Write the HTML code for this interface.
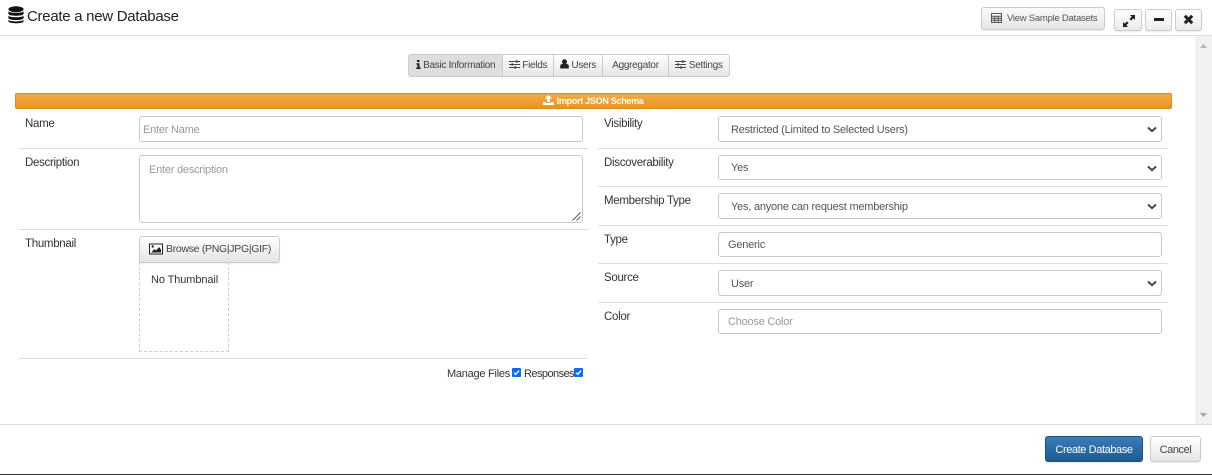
<!DOCTYPE html>
<html><head><meta charset="utf-8"><style>
html,body{margin:0;padding:0;width:1212px;height:475px;overflow:hidden;background:#fff}
body{position:relative;font-family:"Liberation Sans",sans-serif;font-size:11.5px;color:#333}
.a,.l,.f,.hr,.b{position:absolute;box-sizing:border-box;white-space:nowrap}
.hr{height:1px;background:#dcdcdc}
.l{font-size:11.5px;color:#333;line-height:14px;letter-spacing:-.3px;margin-top:1px}
.f{border:1px solid #c8c8c8;border-radius:3px;background:#fff;height:26px;line-height:24px;color:#555;font-size:11px;padding-left:12px;padding-top:1px;letter-spacing:-.22px}
.f.ph{color:#999;padding-left:9px}
.f svg{position:absolute;right:4px;top:9px}
.b{border:1px solid #ccc;border-radius:3px;background:linear-gradient(#fff,#e3e3e3);text-align:center;color:#333;box-shadow:0 1px 1px rgba(0,0,0,.08)}
.tab{position:absolute;box-sizing:border-box;top:54px;height:23px;border:1px solid #ccc;border-left:0;background:linear-gradient(#fff,#e6e6e6);font-size:10px;line-height:21px;text-align:center;color:#444;white-space:nowrap;letter-spacing:-.3px}
svg{display:inline-block;vertical-align:-1px}
</style></head><body>

<svg class="a" style="left:8px;top:6px" width="16" height="18" viewBox="0 0 16 18"><g fill="#111"><ellipse cx="8" cy="3.2" rx="7.6" ry="3"/><path d="M.4 5.2C1.5 7.4 14.5 7.4 15.6 5.2V8C14.5 10.4 1.5 10.4.4 8z"/><path d="M.4 9.6C1.5 11.8 14.5 11.8 15.6 9.6V12.2C14.5 14.6 1.5 14.6.4 12.2z"/><path d="M.4 13.8C1.5 16 14.5 16 15.6 13.8V15.4C14.5 18 1.5 18 .4 15.4z"/></g></svg>
<div class="a" style="left:27px;top:8px;font-size:15px;letter-spacing:-.28px;line-height:18px;color:#222">Create a new Database</div>

<div class="b" style="left:981px;top:7px;width:124px;height:23px;font-size:9.5px;letter-spacing:-.25px;line-height:21px;color:#555;text-align:left;padding-left:25px;background:linear-gradient(#fafafa,#e6e6e6)">View Sample Datasets
<svg class="a" style="left:9px;top:5px" width="11" height="10" viewBox="0 0 11 10"><path d="M.5.5h10v9H.5zM.5 3.2h10M.5 5.2h10M.5 7.3h10M3.7 3.2v6.3M7.2 3.2v6.3" fill="none" stroke="#555" stroke-width="1"/></svg></div>
<div class="b" style="left:1114px;top:9px;width:28px;height:22px;background:linear-gradient(#fff,#ececec)"><svg class="a" style="left:8px;top:5px" width="12" height="12" viewBox="0 0 12 12"><path d="M7 0h5v5L10.3 3.4 8 5.6 6.5 4 8.7 1.700zM0 12V7l1.700 1.600L4 6.400 5.500 8 3.300 10.300 5 12z" fill="#222"/></svg></div>
<div class="b" style="left:1145px;top:9px;width:27px;height:22px;background:linear-gradient(#fff,#ececec)"><div class="a" style="left:8px;top:8px;width:10px;height:3px;background:#222"></div></div>
<div class="b" style="left:1175px;top:9px;width:27px;height:22px;background:linear-gradient(#fff,#ececec)"><svg class="a" style="left:7px;top:4px" width="11" height="11" viewBox="0 0 11 11"><path d="M1.800 1.800L9.200 9.200M9.200 1.800L1.800 9.200" stroke="#222" stroke-width="3"/></svg></div>
<div class="hr" style="left:0;top:35px;width:1212px"></div>

<div class="a" style="left:1195px;top:36px;width:17px;height:388px;background:#f1f1f1"></div>
<svg class="a" style="left:1199px;top:43px" width="9" height="6"><path d="M4.500 1L8 5H1z" fill="#b5b5b5"/></svg>
<svg class="a" style="left:1199px;top:412px" width="9" height="6"><path d="M1 1h7L4.500 5z" fill="#a5a5a5"/></svg>

<div class="tab" style="left:408px;width:95px;border-left:1px solid #ccc;border-radius:3px 0 0 3px;background:#dedede">
<svg width="5" height="9" viewBox="0 0 5 9" style="vertical-align:-1px"><path d="M1 0h2.500v2H1zM.3 3.200h3.200V7.500H4.700V9H.3V7.500H1.300V4.500H.3z" fill="#222"/></svg> Basic Information</div>
<div class="tab" style="left:503px;width:51px"><svg width="11" height="9" viewBox="0 0 11 9"><path d="M0 1.500h11M0 4.500h11M0 7.500h11" stroke="#444" stroke-width="1"/><path d="M7 .2h1.500v2.600H7zM2.500 3.200H4v2.600H2.500zM5.500 6.200H7v2.600H5.500z" fill="#444"/></svg> Fields</div>
<div class="tab" style="left:554px;width:49px"><svg width="9" height="10" viewBox="0 0 9 10"><circle cx="4.500" cy="2.800" r="2.500" fill="#222"/><path d="M.2 9.500V7C.2 5.300 2 4.800 4.500 4.800S8.800 5.300 8.800 7V9.500z" fill="#222"/></svg> Users</div>
<div class="tab" style="left:603px;width:66px">Aggregator</div>
<div class="tab" style="left:669px;width:61px;border-radius:0 3px 3px 0"><svg width="11" height="9" viewBox="0 0 11 9"><path d="M0 1.500h11M0 4.500h11M0 7.500h11" stroke="#444" stroke-width="1"/><path d="M7 .2h1.500v2.600H7zM2.500 3.200H4v2.600H2.500zM5.500 6.200H7v2.600H5.500z" fill="#444"/></svg> Settings</div>

<div class="a" style="left:15px;top:93px;width:1157px;height:16px;border:1px solid #dd8a1c;border-radius:2px;background:linear-gradient(#f3ab4c,#eb941a);color:#fff;font-size:9px;letter-spacing:-.28px;font-weight:bold;line-height:14px;text-align:center"><svg width="11" height="10" viewBox="0 0 11 10"><path d="M5.500 0L9 3.500H7V7H4V3.500H2zM0 7h3v1h5V7h3v3H0z" fill="#fff"/></svg> Import JSON Schema</div>

<div class="l" style="left:25px;top:116px">Name</div>
<div class="f ph" style="left:139px;top:116px;width:444px;padding-left:3px">Enter Name</div>
<div class="hr" style="left:19px;top:148px;width:569px"></div>
<div class="l" style="left:25px;top:155px">Description</div>
<div class="f ph" style="left:139px;top:155px;width:444px;height:68px;padding-left:9px;line-height:27px">Enter description
<svg style="right:1px;top:auto;bottom:1px" width="9" height="9" viewBox="0 0 9 9"><path d="M8.500 .5L.5 8.500M8.500 4.500L4.500 8.500" stroke="#555" stroke-width="1"/></svg></div>
<div class="hr" style="left:19px;top:229px;width:569px"></div>
<div class="l" style="left:25px;top:236px">Thumbnail</div>
<div class="b" style="left:139px;top:236px;width:141px;height:27px;font-size:10.5px;letter-spacing:-.3px;line-height:25px;padding-left:26px;text-align:left;color:#444;background:linear-gradient(#fff,#e4e4e4)">Browse (PNG|JPG|GIF)
<svg class="a" style="left:9px;top:6px" width="14" height="12" viewBox="0 0 14 12"><path d="M.5 1h13v10H.5z" fill="#fff" stroke="#222"/><path d="M2 9.500L5.500 6l1.500 1.500L10 4l2 2.500v3z" fill="#222"/><circle cx="3.700" cy="3.500" r="1.200" fill="#222"/></svg></div>
<div class="a" style="left:139px;top:262px;width:90px;height:90px;border:1px dashed #ccc;font-size:11px;letter-spacing:-.1px;line-height:14px;padding:10px 0 0 11px;color:#333">No Thumbnail</div>
<div class="hr" style="left:19px;top:358px;width:569px"></div>
<div class="l" style="left:447px;top:366px;font-size:11px;letter-spacing:-.25px">Manage Files</div>
<svg class="a" style="left:512px;top:368px" width="9" height="9" viewBox="0 0 9 9"><rect width="9" height="9" rx="1" fill="#0a6cf5"/><path d="M2 4.700L3.800 6.400 7 2.600" fill="none" stroke="#fff" stroke-width="1.400"/></svg>
<div class="l" style="left:524px;top:366px;font-size:11px;letter-spacing:-.55px">Responses</div>
<svg class="a" style="left:574px;top:368px" width="9" height="9" viewBox="0 0 9 9"><rect width="9" height="9" rx="1" fill="#0a6cf5"/><path d="M2 4.700L3.800 6.400 7 2.600" fill="none" stroke="#fff" stroke-width="1.400"/></svg>

<div class="l" style="left:604px;top:116px">Visibility</div>
<div class="f" style="left:718px;top:116px;width:444px">Restricted (Limited to Selected Users)<svg width="10" height="7" viewBox="0 0 10 7"><path d="M1 1.500L5 5.200 9 1.500" fill="none" stroke="#444" stroke-width="2"/></svg></div>
<div class="hr" style="left:598px;top:148px;width:570px"></div>
<div class="l" style="left:604px;top:155px">Discoverability</div>
<div class="f" style="left:718px;top:155px;width:444px;height:25px;padding-top:0">Yes<svg width="10" height="7" viewBox="0 0 10 7"><path d="M1 1.500L5 5.200 9 1.500" fill="none" stroke="#444" stroke-width="2"/></svg></div>
<div class="hr" style="left:598px;top:186px;width:570px"></div>
<div class="l" style="left:604px;top:193px">Membership Type</div>
<div class="f" style="left:718px;top:193px;width:444px">Yes, anyone can request membership<svg width="10" height="7" viewBox="0 0 10 7"><path d="M1 1.500L5 5.200 9 1.500" fill="none" stroke="#444" stroke-width="2"/></svg></div>
<div class="hr" style="left:598px;top:225px;width:570px"></div>
<div class="l" style="left:604px;top:232px">Type</div>
<div class="f ph" style="left:718px;top:232px;width:444px;height:25px;line-height:23px;color:#555">Generic</div>
<div class="hr" style="left:598px;top:263px;width:570px"></div>
<div class="l" style="left:604px;top:270px">Source</div>
<div class="f" style="left:718px;top:270px;width:444px">User<svg width="10" height="7" viewBox="0 0 10 7"><path d="M1 1.500L5 5.200 9 1.500" fill="none" stroke="#444" stroke-width="2"/></svg></div>
<div class="hr" style="left:598px;top:302px;width:570px"></div>
<div class="l" style="left:604px;top:309px">Color</div>
<div class="f ph" style="left:718px;top:309px;width:444px;height:25px;line-height:23px">Choose Color</div>

<div class="hr" style="left:0;top:424px;width:1212px"></div>
<div class="b" style="left:1045px;top:436px;width:98px;height:26px;border-color:#1d4f7f;background:linear-gradient(#3a7cb8,#1f5b95);color:#fff;font-size:11px;letter-spacing:-.4px;line-height:26px">Create Database</div>
<div class="b" style="left:1150px;top:436px;width:51px;height:26px;font-size:11px;letter-spacing:-.4px;line-height:26px;color:#444;background:linear-gradient(#fff,#e6e6e6)">Cancel</div>
<div class="a" style="left:0;top:474px;width:1212px;height:1px;background:#333"></div>
</body></html>
